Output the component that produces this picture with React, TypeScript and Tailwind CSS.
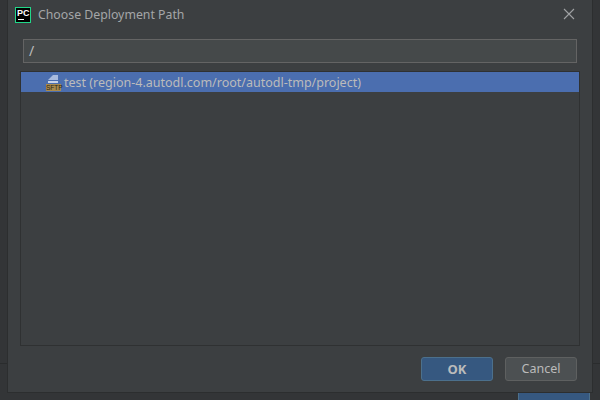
export default function App() {
  return (
    <div className="relative w-[600px] h-[400px] overflow-hidden bg-[#333537] font-['Noto_Sans',sans-serif]">
      {/* stuff behind the dialog */}
      <div className="absolute left-0 top-[363px] w-[7px] h-px bg-[#2a2c2d]" />
      <div className="absolute left-[593px] top-[363px] w-[7px] h-px bg-[#2a2c2d]" />
      <div className="absolute left-[518px] top-[388px] w-[72px] h-[24px] rounded-[3px] border border-[#4c708c] bg-[#365880]" />

      {/* dialog */}
      <div className="absolute left-[7px] top-0 w-[586px] h-[393px] flex flex-col bg-[#3c3f41] border-x border-b border-[#2c2e2f]">
        <div className="h-[30px] flex items-center pl-[7px] pr-[17px]">
          <PycharmLogo />
          <span className="ml-[7px] text-[12.3px] text-[#a4a6a8]">Choose Deployment Path</span>
          <svg className="ml-auto -mt-[2px]" width="12" height="12" viewBox="0 0 12 12" fill="none">
            <path d="M1 1L11 11M11 1L1 11" stroke="#a0a2a4" strokeWidth="1.1" />
          </svg>
        </div>

        <div className="flex-1 flex flex-col px-[12px] pt-[9px] pb-[11px]">
          <div className="mx-[3px] h-[24px] flex items-center pl-[5px] pb-[2px] border border-[#646464] bg-[#45494a] text-[14px] text-[#bbbbbb]">
            /
          </div>

          <div className="mt-[8px] flex-1 border border-[#2f3132] bg-[#3c3f41]">
            <div className="h-[20px] flex items-center pl-[25px] bg-[#4b6eaf] text-[12.5px] text-[#bbbbbb]">
              <SftpIcon />
              <span className="leading-[20px] pt-px">test (region-4.autodl.com/root/autodl-tmp/project)</span>
            </div>
          </div>

          <div className="mt-[11px] mr-[3px] flex justify-end gap-[12px]">
            <button className="w-[72px] h-[24px] pt-px rounded-[3px] border border-[#4c708c] bg-[#365880] text-[13px] font-bold text-[#bbbbbb]">
              OK
            </button>
            <button className="w-[72px] h-[24px] pt-px rounded-[3px] border border-[#5e6060] bg-[#4c5052] text-[12.5px] text-[#bbbbbb]">
              Cancel
            </button>
          </div>
        </div>
      </div>
    </div>
  );
}

function PycharmLogo() {
  return (
    <div className="relative w-[16px] h-[16px] shrink-0 bg-black border border-[#21d789]">
      <span className="absolute left-[1px] top-0 text-[9px] leading-[10px] font-bold text-white font-['Liberation_Sans',sans-serif]">
        PC
      </span>
      <div className="absolute left-[2px] top-[11px] w-[6px] h-px bg-white" />
    </div>
  );
}

function SftpIcon() {
  return (
    <div className="relative w-[18px] h-[18px] shrink-0">
      <svg className="absolute left-[2px] top-[1px]" width="11" height="10" viewBox="0 0 11 10">
        <path d="M0 6L5 1H10V6Z" fill="#a9bbde" />
        <path d="M0 7H10V9H0Z" fill="#c9d4ea" />
      </svg>
      <div className="absolute left-0 top-[11px] w-[15px] h-[7px] bg-[#a98a4c] text-[6.5px] leading-[7px] whitespace-nowrap text-[#2a2417] text-center font-['Liberation_Sans',sans-serif]">
        SFTP
      </div>
    </div>
  );
}
